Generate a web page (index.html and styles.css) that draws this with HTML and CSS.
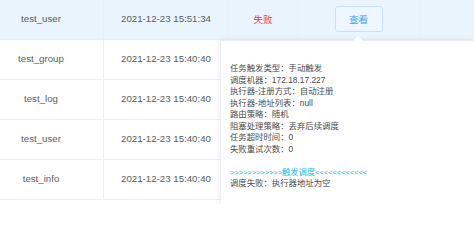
FILE: index.html
```html
<!DOCTYPE html>
<html>
<head>
<meta charset="utf-8">
<link rel="stylesheet" href="styles.css">
</head>
<body>
<div class="table">
  <div class="row hover">
    <div class="cell c1">test_user</div>
    <div class="cell c2">2021-12-23 15:51:34</div>
    <div class="cell c3"><span class="fail">失败</span></div>
    <div class="cell c4"><span class="btn">查看</span></div>
    <div class="cell c5"></div>
  </div>
  <div class="row">
    <div class="cell c1">test_group</div>
    <div class="cell c2">2021-12-23 15:40:40</div>
    <div class="cell c3"></div>
    <div class="cell c4"></div>
    <div class="cell c5"></div>
  </div>
  <div class="row">
    <div class="cell c1">test_log</div>
    <div class="cell c2">2021-12-23 15:40:40</div>
    <div class="cell c3"></div>
    <div class="cell c4"></div>
    <div class="cell c5"></div>
  </div>
  <div class="row">
    <div class="cell c1">test_user</div>
    <div class="cell c2">2021-12-23 15:40:40</div>
    <div class="cell c3"></div>
    <div class="cell c4"></div>
    <div class="cell c5"></div>
  </div>
  <div class="row">
    <div class="cell c1">test_info</div>
    <div class="cell c2">2021-12-23 15:40:40</div>
    <div class="cell c3"></div>
    <div class="cell c4"></div>
    <div class="cell c5"></div>
  </div>
</div>
<div class="popover">
  <div class="arrow"></div>
  <div class="line">任务触发类型：手动触发</div>
  <div class="line">调度机器：172.18.17.227</div>
  <div class="line">执行器-注册方式：自动注册</div>
  <div class="line">执行器-地址列表：null</div>
  <div class="line">路由策略：随机</div>
  <div class="line">阻塞处理策略：丢弃后续调度</div>
  <div class="line">任务超时时间：0</div>
  <div class="line">失败重试次数：0</div>
  <div class="line">&nbsp;</div>
  <div class="line trig">&gt;&gt;&gt;&gt;&gt;&gt;&gt;&gt;&gt;&gt;&gt;&gt;<span>触发调度</span>&lt;&lt;&lt;&lt;&lt;&lt;&lt;&lt;&lt;&lt;&lt;&lt;</div>
  <div class="line">调度失败：执行器地址为空</div>
</div>
</body>
</html>
```

FILE: styles.css
```css
html, body {
  margin: 0;
  padding: 0;
  background: #ffffff;
  overflow: hidden;
}
body {
  width: 474px;
  height: 204px;
  position: relative;
  font-family: "Liberation Sans", "Noto Sans CJK SC", sans-serif;
}
.table {
  display: flex;
  flex-direction: column;
}
.row {
  display: flex;
  height: 40px;
  box-sizing: border-box;
  border-bottom: 1px solid #ebeef5;
  background: #ffffff;
}
.row.hover {
  background: #eaf4fc;
}
.cell {
  box-sizing: border-box;
  border-right: 1px solid #ebeef5;
  display: flex;
  align-items: center;
  justify-content: center;
  font-size: 9.7px;
  color: #5a5c61;
  padding-bottom: 2px;
}
.c1 { width: 104px; padding-right: 21px; }
.c2 { width: 125px; }
.c3 { width: 69px; }
.c4 { width: 122px; }
.c5 { width: 54px; border-right: none; }
.fail {
  color: #f03a3a;
  font-family: "Noto Sans CJK SC", sans-serif;
  font-size: 9.5px;
}
.btn {
  display: flex;
  align-items: center;
  justify-content: center;
  width: 48px;
  height: 26px;
  box-sizing: border-box;
  border: 1px solid #c6e1fb;
  border-radius: 3px;
  background: #eef6ff;
  color: #409eff;
  font-family: "Noto Sans CJK SC", sans-serif;
  font-size: 9.5px;
  margin-top: 1px;
}
.popover {
  position: absolute;
  left: 220px;
  top: 40px;
  right: 0;
  bottom: 0;
  box-sizing: border-box;
  background: #ffffff;
  border-left: 1px solid #ebeef5;
  border-top: 1px solid #ebeef5;
  box-shadow: -1px 0 5px rgba(0, 0, 0, 0.07);
  padding: 22px 0 0 9px;
  font-family: "Liberation Sans", "Noto Sans CJK SC", sans-serif;
  font-size: 8.4px;
  line-height: 11.5px;
  color: #4a4a4a;
}
.arrow {
  position: absolute;
  left: 132px;
  top: -5px;
  width: 0;
  height: 0;
  border-left: 5px solid transparent;
  border-right: 5px solid transparent;
  border-bottom: 5px solid #ffffff;
}
.line {
  white-space: nowrap;
}
.trig {
  color: #1fb3e8;
  font-size: 7.6px;
  letter-spacing: -0.1px;
}
.trig span {
  font-size: 8.4px;
}
```
